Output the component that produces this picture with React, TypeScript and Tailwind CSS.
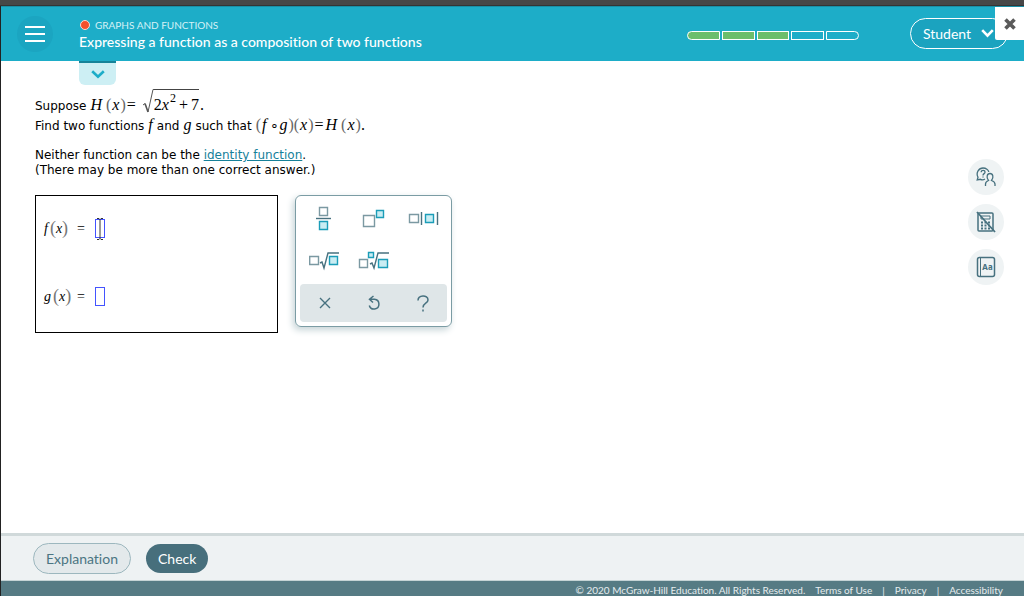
import type { ReactNode } from "react";

const sans = "font-['Lato','Liberation_Sans',sans-serif] [font-variant-ligatures:none]";
const serif = "font-['Liberation_Serif',serif]";

function V({ children }: { children: ReactNode }) {
  return <i>{children}</i>;
}

function Paren({ children }: { children: ReactNode }) {
  return (
    <>
      <span className="text-[#666]">(</span>
      <span className="px-px">{children}</span>
      <span className="text-[#666]">)</span>
    </>
  );
}

function Header() {
  return (
    <header className="flex h-[55px] shrink-0 items-start border-t border-[#1a8fa6] bg-[#1dadc8] text-white">
      <button aria-label="Menu" className="mt-[9px] ml-[16px] flex size-9 items-center justify-center rounded-full bg-[#1ba5c1]">
        <svg width="20" height="16" viewBox="0 0 20 16" stroke="white" strokeWidth="2">
          <path d="M0 1H20M0 8H20M0 15H20" />
        </svg>
      </button>
      <div className="ml-[26px] pt-[10px]">
        <div className="flex h-4 items-center gap-[5px] text-[10px] text-[#d5f1f6]">
          <span className="ml-px size-[10px] rounded-full border border-[#ffd9cf] bg-[#f4502c]" />
          GRAPHS AND FUNCTIONS
        </div>
        <h1 className="text-[14px] leading-[18px] font-medium whitespace-nowrap">Expressing a function as a composition of two functions</h1>
      </div>
      <div className="mt-[24px] ml-auto flex gap-[2px]" role="progressbar" aria-label="Progress" aria-valuenow={3} aria-valuemax={5}>
        <span className="h-[9px] w-[33px] rounded-l-full border border-white bg-[#6cbe6c]" />
        <span className="h-[9px] w-[33px] border border-white bg-[#6cbe6c]" />
        <span className="h-[9px] w-[32px] border border-white bg-[#6cbe6c]" />
        <span className="h-[9px] w-[33px] border border-white" />
        <span className="h-[9px] w-[33px] rounded-r-full border border-white" />
      </div>
      <button className="mt-[11px] mr-[16px] ml-[51px] flex h-[31px] w-[98px] items-center justify-between rounded-full border border-white bg-[#1ba3bf] pr-[13px] pl-[12px] text-[14px]">
        Student
        <svg width="13" height="9" viewBox="0 0 13 9" fill="none" stroke="white" strokeWidth="2.6">
          <path d="M1.2 1.2L6.5 6.6L11.8 1.2" />
        </svg>
      </button>
    </header>
  );
}

function Problem() {
  return (
    <section className="text-[12px] leading-[15px] text-black">
      <div className="flex h-[25px] items-baseline gap-[4px] whitespace-nowrap">
        <span>Suppose</span>
        <span className={`${serif} text-[16px]`}>
          <V>H</V> <Paren><V>x</V></Paren><span className="ml-px">=</span>
        </span>
        <span className="ml-[2px] flex items-baseline">
          <svg className="self-start" width="12" height="25" viewBox="0 0 12 25" fill="none" stroke="#555">
            <path d="M1 16L3 14.5" />
            <path d="M3 14.5L6 23" strokeWidth="1.6" />
            <path d="M6 23L11 .5H12" />
          </svg>
          <span className={`flex h-[25px] items-baseline border-t border-[#444] pt-[7px] text-[16px] ${serif}`}>
            2<V>x</V><sup className="-top-[8px] ml-px text-[12px]">2</sup><span className="mx-[3px]">+</span>7
          </span>
          <span className={`ml-px text-[16px] ${serif}`}>.</span>
        </span>
      </div>
      <p className="flex h-[22px] items-baseline gap-[4px] pt-[3px] whitespace-nowrap">
        <span>Find two functions</span>
        <span className={`${serif} text-[16px]`}><V>f</V></span>
        <span>and</span>
        <span className={`${serif} text-[16px]`}><V>g</V></span>
        <span>such that</span>
        <span className={`${serif} text-[16px]`}>
          <Paren><V>f</V> <span className="text-[14px]">∘</span><V>g</V></Paren><Paren><V>x</V></Paren><span className="mr-[2px] ml-px">=</span><V>H</V> <Paren><V>x</V></Paren>.
        </span>
      </p>
      <p className="mt-[12px]">
        Neither function can be the <a href="#identity" className="text-[#16819a] underline">identity function</a>.
        <br />
        (There may be more than one correct answer.)
      </p>
    </section>
  );
}

function Answer({ name, active }: { name: string; active?: boolean }) {
  return (
    <label className={`flex h-[19px] items-center text-[14px] ${serif}`}>
      <span className="flex w-[33px] items-center">
        <V>{name}</V>
        <span className="ml-[2px] text-[18px] text-[#777]">(</span>
        <V>x</V>
        <span className="text-[18px] text-[#777]">)</span>
      </span>
      <span className="w-[18px]">=</span>
      <span className="relative flex">
        <input aria-label={`${name}(x)`} className="h-[19px] w-[10px] border border-[#4353ff] outline-none" />
        {active && (
          <svg className="pointer-events-none absolute -top-px left-[2px]" width="6" height="22" viewBox="0 0 6 22" fill="none" stroke="#333">
            <path d="M0 .5H2L3 1.5L4 .5H6M3 1.5V20.5M0 21.5H2L3 20.5L4 21.5H6" />
          </svg>
        )}
      </span>
    </label>
  );
}

const grey = "#7b99a2";
const teal = "#1b9db8";
const fill = "#c9edf3";
const dark = "#47717f";

function Tool({ label, children }: { label: string; children: ReactNode }) {
  return (
    <button aria-label={label} className="flex h-[42px] items-center justify-center">
      <svg width="32" height="26" viewBox="0 0 32 26" fill="none" strokeWidth="1.4">{children}</svg>
    </button>
  );
}

function Palette() {
  return (
    <section aria-label="Math tools" className="w-[157px] rounded-[6px] border border-[#7b9ca4] px-[4px] pt-px pb-[4px] shadow-[-2px_3px_7px_#c6d4d7]">
      <div className="grid grid-cols-3 pb-[3px]">
        <Tool label="Fraction">
          <path d="M10.5 2.5h8v8h-8z" stroke={grey} />
          <path d="M7 13.5h15" stroke={dark} />
          <path d="M10.5 16.5h8v8h-8z" fill={fill} stroke={teal} />
        </Tool>
        <Tool label="Exponent">
          <path d="M5.5 10.5h11v11h-11z" stroke={grey} />
          <path d="M18.5 5.5h7v7h-7z" fill={fill} stroke={teal} />
        </Tool>
        <Tool label="Absolute value">
          <path d="M2.500 9.500h9v8h-9z" stroke={grey} />
          <path d="M18.5 9.5h8v8h-8z" fill={fill} stroke={teal} />
          <path d="M14.5 7v13M30.5 7v13" stroke={dark} />
        </Tool>
        <Tool label="Square root">
          <path d="M.7 9.5h8.800v8H.7z" stroke={grey} />
          <path d="M11 16l2-1 2 6 4-15h11" stroke={dark} />
          <path d="M20.5 9.5h8v8h-8z" fill={fill} stroke={teal} />
        </Tool>
        <Tool label="Nth root">
          <path d="M1.5 12.5h8v8h-8z" stroke={grey} />
          <path d="M12 17l2-1 2 5 4-15h11" stroke={dark} />
          <path d="M10.5 5.5h5v5h-5zM20.500 12.500h9v8h-9z" fill={fill} stroke={teal} />
        </Tool>
      </div>
      <div className="grid h-[38px] grid-cols-3 rounded-[4px] bg-[#dfe6e8]">
        <button aria-label="Clear" className="flex items-center justify-center">
          <svg width="12" height="12" viewBox="0 0 12 12" stroke={dark} strokeWidth="1.4"><path d="M1 1l10 10M11 1L1 11" /></svg>
        </button>
        <button aria-label="Undo" className="flex items-center justify-center">
          <svg width="14" height="16" viewBox="0 0 14 16" fill="none" stroke={dark} strokeWidth="1.5">
            <path d="M6.5 1L2.5 4.2L6 7.5M2.5 4.3H7.5A4.9 4.9 0 1 1 2.3 10.5" />
          </svg>
        </button>
        <button aria-label="Help" className="flex items-center justify-center">
          <svg width="12" height="17" viewBox="0 0 12 17" fill="none" stroke={dark} strokeWidth="1.5">
            <path d="M1 5.5C1 -.5 11 -.5 11 5C11 8.5 6 8 6 12.5M6 14.5V16.5" />
          </svg>
        </button>
      </div>
    </section>
  );
}

function SideTools() {
  const round = "flex size-9 items-center justify-center rounded-full bg-[#eff3f4]";
  return (
    <nav aria-label="Resources" className="mt-[98px] mr-[20px] ml-auto flex flex-col gap-[9px]">
      <button aria-label="Ask for help" className={round}>
        <svg width="20" height="20" viewBox="0 0 20 20" fill="none" stroke={dark} strokeWidth="1.3">
          <path d="M9 12C7.5 13 6 13 4.5 12.3L1.2 13L2 10.2C-.5 5.5 3 1 7 1C10 1 12.5 3 12.8 5" />
          <path d="M5.2 5.2C5.2 2.8 9 2.8 9 5.2C9 6.8 7 6.5 7 8.5M7 9.5V10.5" />
          <path d="M9.5 19V17C9.5 15 10.5 14.3 12.5 13.5C10 10.5 11 6.5 14 6.5C17 6.5 18 10.5 15.5 13.5C17.5 14.3 19 15 19 17V19" />
        </svg>
      </button>
      <button aria-label="Calculator unavailable" className={round}>
        <svg width="20" height="22" viewBox="0 0 20 22" fill="none" stroke={dark} strokeWidth="1.5">
          <rect x="2" y="2" width="15" height="18" rx="1" />
          <path d="M5 5h9v3H5z" strokeWidth="1" />
          <path d="M5 11.5h10M5 14.5h10M5 17.5h10" strokeDasharray="2 1.5" strokeWidth="1.8" />
          <path d="M1 1l18 20" strokeWidth="1.8" />
        </svg>
      </button>
      <button aria-label="Dictionary" className={round}>
        <svg width="20" height="22" viewBox="0 0 20 22" fill="none" stroke={dark} strokeWidth="1.5">
          <rect x="1.5" y="1.5" width="17" height="19" rx="2" />
          <path d="M4.5 2v18" strokeWidth="1" />
          <text x="6" y="13.5" fontSize="8" fontWeight="700" fontFamily="Inter, sans-serif" fill={dark} stroke="none">Aa</text>
        </svg>
      </button>
    </nav>
  );
}

export default function App() {
  return (
    <div className={`relative flex h-screen min-h-[420px] flex-col overflow-hidden bg-white ${sans}`}>
      <div className="h-[6px] shrink-0 border-b border-[#343434] bg-[#474747]" />
      <div className="flex min-h-0 flex-1 flex-col border-l border-[#222]">
        <Header />
        <main className="flex min-h-0 flex-1 items-start">
          <div className="ml-[34px] font-['DejaVu_Sans',sans-serif]">
            <button aria-label="Expand" className="ml-[44px] flex h-[24px] w-[37px] items-center justify-center rounded-b-[6px] border-t-2 border-[#168399] bg-[#cdeff4]">
              <svg width="14" height="9" viewBox="0 0 14 9" fill="none" stroke="#1dadc8" strokeWidth="2.6"><path d="M1.2 1.2L7 6.8L12.8 1.2" /></svg>
            </button>
            <div className="mt-[4px]"><Problem /></div>
            <div className="mt-[17px] flex items-start gap-[17px]">
              <div className="flex h-[138px] w-[243px] flex-col gap-[49px] border border-black pt-[23px] pl-[8px]">
                <Answer name="f" active />
                <Answer name="g" />
              </div>
              <Palette />
            </div>
          </div>
          <SideTools />
        </main>
        <div className="flex h-[48px] shrink-0 items-center gap-[15px] border-t-[3px] border-b border-t-[#d0d9da] border-b-[#c5d3d5] bg-[#eef2f3] pl-[32px] text-[14px]">
          <button className="h-[31px] rounded-full border border-[#9cb7be] bg-[#e3e9eb] px-[12px] text-[#4b7582]">Explanation</button>
          <button className="h-[29px] rounded-full bg-[#476f7c] px-[12px] text-white">Check</button>
        </div>
        <footer className="flex h-[15px] shrink-0 items-center justify-end bg-[#567b84] pt-[3px] pr-[21px] text-[10px] leading-[12px] whitespace-nowrap text-[#e6edef]">
          <span className="mr-[10px]">© 2020 McGraw-Hill Education. All Rights Reserved.</span>
          <a href="#terms">Terms of Use</a>
          <span className="mx-[10px]">|</span>
          <a href="#privacy">Privacy</a>
          <span className="mx-[10px]">|</span>
          <a href="#accessibility">Accessibility</a>
        </footer>
      </div>
      <button aria-label="Close" className="absolute top-[7px] right-0 flex h-[33px] w-[29px] items-center justify-center rounded-bl-[2px] bg-white">
        <svg width="12" height="12" viewBox="0 0 12 12" stroke="#5a5a5a" strokeWidth="3.6"><path d="M1.5 1.5l9 9M10.5 1.5l-9 9" /></svg>
      </button>
    </div>
  );
}
